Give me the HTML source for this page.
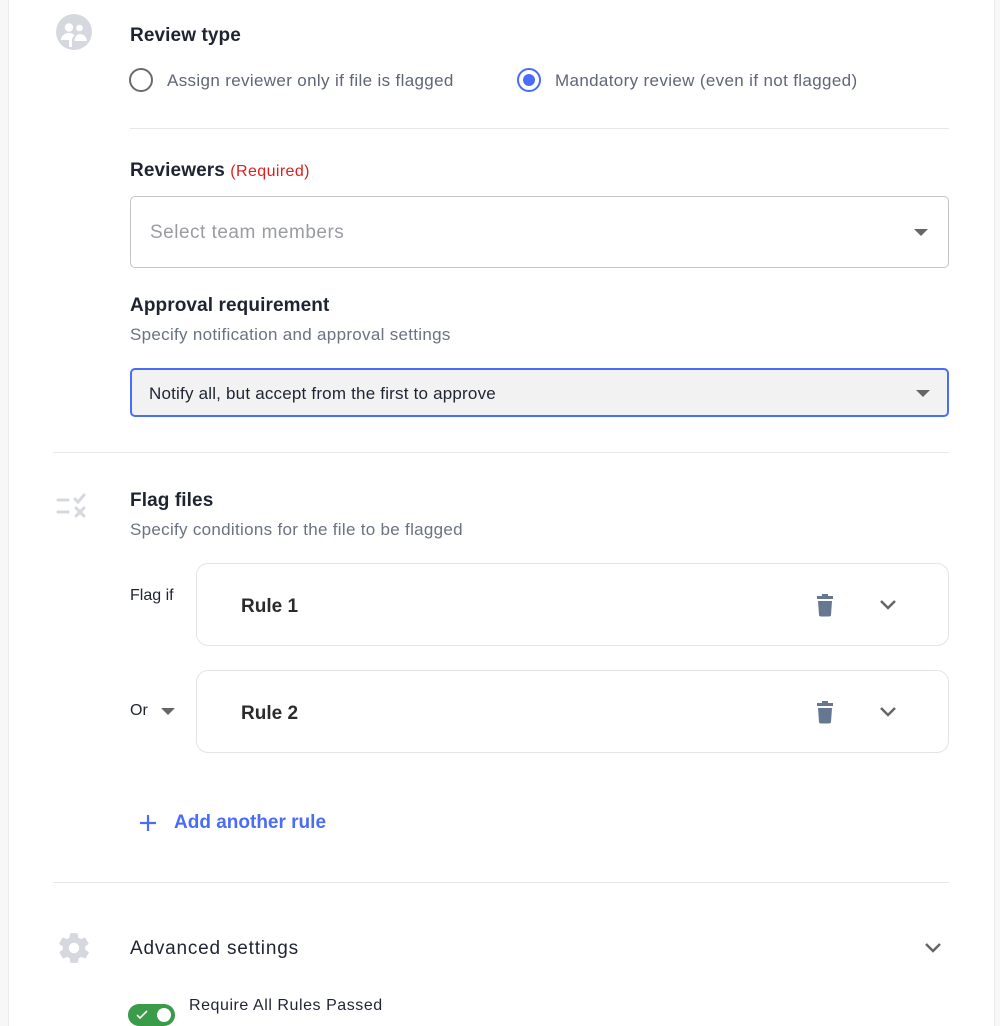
<!DOCTYPE html>
<html><head><meta charset="utf-8"><style>
*{margin:0;padding:0;box-sizing:border-box}
body{width:1000px;height:1026px;background:#fff;position:relative;overflow:hidden;font-family:"Liberation Sans",sans-serif;}
.a{position:absolute;white-space:nowrap}
.h{font-size:19px;font-weight:600;color:#1f2433;letter-spacing:0.1px}
.s{font-size:17px;color:#6b7280;letter-spacing:0.1px}
.line{position:absolute;height:1px;background:#e5e7eb}
.card{position:absolute;left:196px;width:753px;height:83px;border:1px solid #e2e4e9;border-radius:12px;background:#fff}
</style></head><body>
<div style="position:absolute;left:0;top:0;width:9px;height:1026px;background:#f7f7f8;border-right:1px solid #ececef"></div>
<div style="position:absolute;left:994px;top:0;width:6px;height:1026px;background:#f7f7f8;border-left:1px solid #ececef"></div>

<svg class="a" style="left:56px;top:14px" width="36" height="36" viewBox="0 0 36 36"><circle cx="18" cy="18" r="18" fill="#d5d8de"/><circle cx="13" cy="13.5" r="4.2" fill="#fff"/><circle cx="23.5" cy="14" r="3.3" fill="#fff"/><path d="M5 26c0-4 3.5-7 8-7 2.5 0 4.5 1 5.5 2.5C16.5 23 16 25 16 27v6h-3v-7z" fill="#fff"/><path d="M18.5 27c0-4 2.5-7 5.5-7 3.5 0 6.5 2.5 7 7z" fill="#fff"/></svg>

<div class="a h" style="left:130px;top:25px">Review type</div>
<div class="a" style="left:129px;top:68px;width:24px;height:24px;border:2px solid #6b6b6b;border-radius:50%"></div>
<div class="a" style="left:167px;top:71px;font-size:17px;color:#5f6675;letter-spacing:0.35px">Assign reviewer only if file is flagged</div>
<div class="a" style="left:517px;top:68px;width:24px;height:24px;border:2px solid #4a6cf7;border-radius:50%"><div style="position:absolute;left:4px;top:4px;width:12px;height:12px;border-radius:50%;background:#4a6cf7"></div></div>
<div class="a" style="left:555px;top:71px;font-size:17px;color:#5f6675;letter-spacing:0.35px">Mandatory review (even if not flagged)</div>
<div class="line" style="left:130px;top:128px;width:819px"></div>

<div class="a h" style="left:130px;top:160px">Reviewers <span style="font-size:16px;font-weight:400;color:#dc1f1f;letter-spacing:0.4px">(Required)</span></div>
<div class="a" style="left:130px;top:196px;width:819px;height:72px;border:1px solid #c4c4c4;border-radius:5px"></div>
<div class="a" style="left:150px;top:222px;font-size:19px;color:#9a9ca1;letter-spacing:0.5px">Select team members</div>
<div class="a" style="left:914px;top:229px;border-left:7px solid transparent;border-right:7px solid transparent;border-top:7px solid #666"></div>

<div class="a h" style="left:130px;top:295px">Approval requirement</div>
<div class="a s" style="left:130px;top:325px;letter-spacing:0.3px">Specify notification and approval settings</div>
<div class="a" style="left:130px;top:368px;width:819px;height:49px;border:2px solid #4a6cf7;border-radius:5px;background:#f2f2f2"></div>
<div class="a" style="left:149px;top:384px;font-size:17px;color:#1f2433;letter-spacing:0.2px">Notify all, but accept from the first to approve</div>
<div class="a" style="left:916px;top:390px;border-left:7px solid transparent;border-right:7px solid transparent;border-top:7px solid #666"></div>

<div class="line" style="left:53px;top:452px;width:896px"></div>

<svg class="a" style="left:55px;top:492px" width="36" height="28" viewBox="0 0 36 28"><g stroke="#d5d8de" stroke-width="3" stroke-linecap="round" fill="none"><path d="M3 8h10M3 20h10M20 7l3 3 6-7M21 16l8 8M29 16l-8 8"/></g></svg>
<div class="a h" style="left:130px;top:490px">Flag files</div>
<div class="a s" style="left:130px;top:520px;letter-spacing:0.3px">Specify conditions for the file to be flagged</div>

<div class="a" style="left:130px;top:587px;font-size:16px;color:#1f2433">Flag if</div>
<div class="card" style="top:563px"></div>
<div class="a" style="left:241px;top:596px;font-size:19px;font-weight:600;color:#2b2b2b">Rule 1</div>

<div class="a" style="left:130px;top:702px;font-size:16px;color:#1f2433">Or</div>
<div class="a" style="left:161px;top:708px;border-left:7px solid transparent;border-right:7px solid transparent;border-top:7px solid #666"></div>
<div class="card" style="top:670px"></div>
<div class="a" style="left:241px;top:703px;font-size:19px;font-weight:600;color:#2b2b2b">Rule 2</div>

<svg class="a" style="left:816px;top:593px" width="18" height="24" viewBox="0 0 18 24"><path d="M6 1h6v2h5v3H1V3h5z" fill="#667792"/><path d="M2 8h14l-1 14c0 1-1 1.5-2 1.5H5c-1 0-2-.5-2-1.5z" fill="#667792"/></svg>
<svg class="a" style="left:816px;top:700px" width="18" height="24" viewBox="0 0 18 24"><path d="M6 1h6v2h5v3H1V3h5z" fill="#667792"/><path d="M2 8h14l-1 14c0 1-1 1.5-2 1.5H5c-1 0-2-.5-2-1.5z" fill="#667792"/></svg>
<svg class="a" style="left:879px;top:599px" width="18" height="12" viewBox="0 0 18 12"><path d="M2 2l7 7 7-7" stroke="#666" stroke-width="2.5" fill="none"/></svg>
<svg class="a" style="left:879px;top:706px" width="18" height="12" viewBox="0 0 18 12"><path d="M2 2l7 7 7-7" stroke="#666" stroke-width="2.5" fill="none"/></svg>

<svg class="a" style="left:139px;top:814px" width="18" height="18" viewBox="0 0 18 18"><path d="M9 1v16M1 9h16" stroke="#4a6cf7" stroke-width="2.2"/></svg>
<div class="a" style="left:174px;top:812px;font-size:19px;font-weight:600;color:#4a6cf7">Add another rule</div>

<div class="line" style="left:53px;top:882px;width:896px"></div>

<svg class="a" style="left:56px;top:930px" width="36" height="36" viewBox="0 0 24 24"><path fill="#d5d8de" d="M19.4 13c0-.3.1-.6.1-1s0-.7-.1-1l2.1-1.6c.2-.2.2-.4.1-.6l-2-3.5c-.1-.2-.4-.3-.6-.2l-2.5 1c-.5-.4-1.1-.7-1.7-1l-.4-2.6c0-.3-.2-.4-.5-.4h-4c-.3 0-.5.2-.5.4l-.4 2.6c-.6.3-1.200.6-1.700 1l-2.500-1c-.2-.1-.5 0-.6.2l-2 3.5c-.1.2-.1.5.1.6L4.6 11c0 .3-.1.7-.1 1s0 .7.1 1l-2.1 1.6c-.2.2-.2.4-.1.6l2 3.5c.1.2.4.3.6.2l2.5-1c.5.4 1.1.7 1.7 1l.4 2.6c0 .3.2.4.5.4h4c.3 0 .5-.2.5-.4l.4-2.6c.6-.3 1.2-.6 1.7-1l2.5 1c.2.1.5 0 .6-.2l2-3.5c.1-.2.1-.5-.1-.6zM12 15.5A3.5 3.5 0 1 1 12 8.5a3.5 3.5 0 0 1 0 7z"/></svg>
<div class="a" style="left:130px;top:938px;font-size:19px;font-weight:500;color:#1f2433;letter-spacing:0.8px">Advanced settings</div>
<svg class="a" style="left:924px;top:942px" width="18" height="12" viewBox="0 0 18 12"><path d="M2 2l7 7 7-7" stroke="#666" stroke-width="2.5" fill="none"/></svg>

<div class="a" style="left:128px;top:1004px;width:47px;height:22px;border-radius:11px;background:#3a9b48"><svg style="position:absolute;left:8px;top:6px" width="12" height="10" viewBox="0 0 12 10"><path d="M1 5l3 3 7-7" stroke="#fff" stroke-width="1.6" fill="none"/></svg><div style="position:absolute;right:4px;top:4px;width:14px;height:14px;border-radius:50%;background:#fff"></div></div>
<div class="a" style="left:189px;top:997px;font-size:16px;font-weight:500;color:#1f2433;letter-spacing:0.55px">Require All Rules Passed</div>
</body></html>
